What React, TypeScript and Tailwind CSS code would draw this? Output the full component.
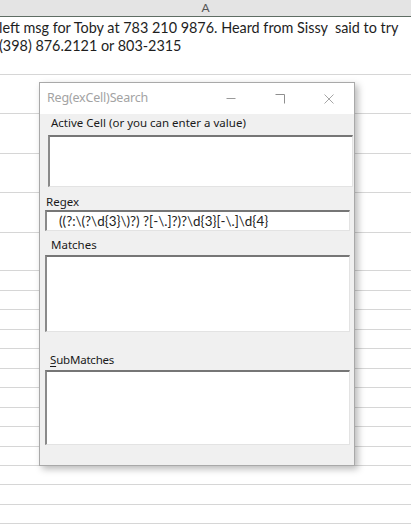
import React from 'react';

const rowHeights = [39, 40, 39, 40, 38, 20, 19, 20, 19, 20, 19, 20, 19, 20, 19, 19, 20, 19, 20];

function Field({ className }: { className: string }) {
  return (
    <div
      className={
        'bg-white border-t-2 border-l-2 border-t-[#767676] border-l-[#8a8a8a] border-r border-b border-r-[#e3e3e3] border-b-[#e3e3e3] ' +
        className
      }
    />
  );
}

function Dialog() {
  return (
    <div className="absolute left-[39px] top-[82px] w-[316px] h-[384px] border border-[#a9a9a9] bg-[#f0f0f0] shadow-[3px_3px_7px_rgba(0,0,0,0.28)] flex flex-col font-['Noto_Sans',sans-serif] text-[11.5px] text-[#1a1a1a]">
      <div className="h-[31px] bg-white flex items-center pl-[7px] pr-[20px]">
        <span className="text-[12.5px] text-[#a3a3a3] tracking-[-0.2px]">Reg(exCell)Search</span>
        <div className="ml-auto flex items-center gap-[39px]">
          <svg width="10" height="10" viewBox="0 0 10 10" className="text-[#9a9a9a]">
            <path d="M0.5 4.5H9.5" stroke="currentColor" strokeWidth="1" />
          </svg>
          <svg width="10" height="10" viewBox="0 0 10 10" className="text-[#8f8f8f]">
            <path d="M0.5 0.5H9.5V9.5" stroke="currentColor" strokeWidth="1" fill="none" />
          </svg>
          <svg width="10" height="10" viewBox="0 0 10 10" className="text-[#a6a6a6]">
            <path d="M0.5 0.5L9.5 9.5M9.5 0.5L0.5 9.5" stroke="currentColor" strokeWidth="1" />
          </svg>
        </div>
      </div>
      <div className="flex flex-col">
        <div className="ml-[11px] mt-[1px] h-[16px] leading-[16px]">Active Cell (or you can enter a value)</div>
        <Field className="ml-[8px] mt-[4px] w-[305px] h-[52px]" />
        <div className="ml-[6px] mt-[7px] h-[16px] leading-[16px]">Regex</div>
        <div className="ml-[5px] w-[305px] h-[21px] bg-white border-t-2 border-l-2 border-t-[#767676] border-l-[#8a8a8a] border-r border-b border-r-[#e3e3e3] border-b-[#e3e3e3] flex items-center pl-[12px] font-['Lato',sans-serif] text-[13.4px] text-[#222]">
          {'((?:\\(?\\d{3}\\)?) ?[-\\.]?)?\\d{3}[-\\.]\\d{4}'}
        </div>
        <div className="ml-[11px] mt-[6px] h-[16px] leading-[16px]">Matches</div>
        <Field className="ml-[5px] mt-[2px] w-[305px] h-[77px]" />
        <div className="ml-[10px] mt-[20px] h-[16px] leading-[16px] tracking-[-0.2px]">
          <span className="underline underline-offset-2">S</span>ubMatches
        </div>
        <Field className="ml-[5px] mt-[2px] w-[305px] h-[75px]" />
      </div>
    </div>
  );
}

export default function App() {
  return (
    <div className="relative w-[411px] h-[529px] overflow-hidden bg-white font-['Lato',sans-serif]">
      <div className="h-[17px] bg-[#e4e4e4] border-b border-[#5f6d64] flex items-center justify-center text-[12px] text-[#555]">
        A
      </div>
      <div className="h-[58px] border-b border-[#d6d6d6] pt-[2px] text-[14.4px] leading-[18px] text-[#1e1e1e] -ml-[1px] whitespace-nowrap">
        <div>left msg for Toby at 783 210 9876. Heard from Sissy&nbsp; said to try</div>
        <div>(398) 876.2121 or 803-2315</div>
      </div>
      {rowHeights.map((h, i) => (
        <div key={i} className="border-b border-[#d6d6d6]" style={{ height: h }} />
      ))}
      <Dialog />
    </div>
  );
}
